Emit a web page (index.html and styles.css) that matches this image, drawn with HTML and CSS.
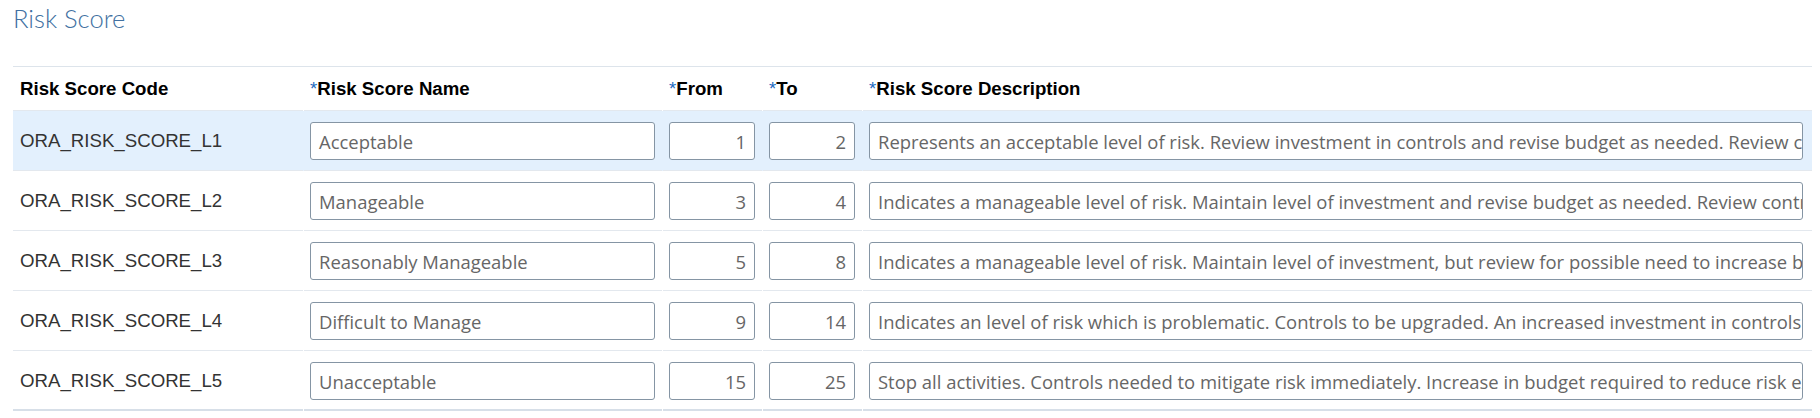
FILE: index.html
```html
<!DOCTYPE html>
<html lang="en">
<head>
<meta charset="utf-8">
<title>Risk Score</title>
<link rel="stylesheet" href="styles.css">
</head>
<body>
<div class="page">
  <h1 class="title">Risk Score</h1>
  <table class="grid">
    <colgroup>
      <col class="c-code"><col class="c-name"><col class="c-num"><col class="c-num"><col class="c-desc">
    </colgroup>
    <thead>
      <tr>
        <th>Risk Score Code</th>
        <th><span class="req">*</span>Risk Score Name</th>
        <th><span class="req">*</span>From</th>
        <th><span class="req">*</span>To</th>
        <th><span class="req">*</span>Risk Score Description</th>
      </tr>
    </thead>
    <tbody>
      <tr class="selected">
        <td class="code">ORA_RISK_SCORE_L1</td>
        <td><div class="field">Acceptable</div></td>
        <td><div class="field num">1</div></td>
        <td><div class="field num">2</div></td>
        <td class="last"><div class="field">Represents an acceptable level of risk. Review investment in controls and revise budget as needed. Review controls periodically.</div></td>
      </tr>
      <tr>
        <td class="code">ORA_RISK_SCORE_L2</td>
        <td><div class="field">Manageable</div></td>
        <td><div class="field num">3</div></td>
        <td><div class="field num">4</div></td>
        <td class="last"><div class="field">Indicates a manageable level of risk. Maintain level of investment and revise budget as needed. Review controls periodically.</div></td>
      </tr>
      <tr>
        <td class="code">ORA_RISK_SCORE_L3</td>
        <td><div class="field">Reasonably Manageable</div></td>
        <td><div class="field num">5</div></td>
        <td><div class="field num">8</div></td>
        <td class="last"><div class="field">Indicates a manageable level of risk. Maintain level of investment, but review for possible need to increase budget.</div></td>
      </tr>
      <tr>
        <td class="code">ORA_RISK_SCORE_L4</td>
        <td><div class="field">Difficult to Manage</div></td>
        <td><div class="field num">9</div></td>
        <td><div class="field num">14</div></td>
        <td class="last"><div class="field">Indicates an level of risk which is problematic. Controls to be upgraded. An increased investment in controls is required.</div></td>
      </tr>
      <tr class="final">
        <td class="code">ORA_RISK_SCORE_L5</td>
        <td><div class="field">Unacceptable</div></td>
        <td><div class="field num">15</div></td>
        <td><div class="field num">25</div></td>
        <td class="last"><div class="field">Stop all activities. Controls needed to mitigate risk immediately. Increase in budget required to reduce risk exposure.</div></td>
      </tr>
    </tbody>
  </table>
</div>
</body>
</html>
```

FILE: styles.css
```css
html, body {
  margin: 0;
  padding: 0;
  background: #ffffff;
}

.page {
  padding: 1px 8px 0 13px;
}

.title {
  margin: 0;
  font-family: "Lato", "Open Sans", sans-serif;
  font-weight: 300;
  font-size: 25.6px;
  line-height: 34px;
  color: #4170a1;
}

.grid {
  margin-top: 31px;
  width: 100%;
  table-layout: fixed;
  border-collapse: separate;
  border-spacing: 0;
  border-top: 1px solid #dde4eb;
  font-family: "Liberation Sans", Arial, sans-serif;
  font-size: 18.67px;
}

.c-code { width: 290px; }
.c-name { width: 359px; }
.c-num { width: 100px; }
.c-desc { width: auto; }

.grid th,
.grid td {
  padding: 0 7px;
  background-image: linear-gradient(#e3e8ee, #e3e8ee);
  background-size: calc(100% - 1px) 1px;
  background-position: right bottom;
  background-repeat: no-repeat;
  text-align: left;
}

.grid th:first-child,
.grid td:first-child {
  background-size: 100% 1px;
}

.grid th {
  height: 43px;
  padding-bottom: 1px;
  font-weight: bold;
  color: #000000;
  vertical-align: middle;
  white-space: nowrap;
}

.req {
  font-weight: normal;
  color: #1f6cbf;
}

.grid td {
  height: 38px;
  padding-top: 11px;
  padding-bottom: 11px;
  vertical-align: middle;
}

.grid td.last {
  padding-right: 9px;
}

.grid td.code {
  color: #333333;
  white-space: nowrap;
}

.grid tr.selected td {
  background-color: #e3f0fd;
}

.grid tr.final td {
  background-image: linear-gradient(#d7dfe8, #d7dfe8);
  background-size: calc(100% - 1px) 2px;
}

.grid tr.final td:first-child {
  background-size: 100% 2px;
}

.field {
  box-sizing: border-box;
  height: 38px;
  padding: 2px 8px 0;
  border: 1px solid #8595a4;
  border-radius: 3px;
  background: #ffffff;
  font-family: "Open Sans", "Noto Sans", sans-serif;
  font-size: 18.45px;
  line-height: 34px;
  color: #666666;
  white-space: nowrap;
  overflow: hidden;
}

.field.num {
  text-align: right;
}
```
